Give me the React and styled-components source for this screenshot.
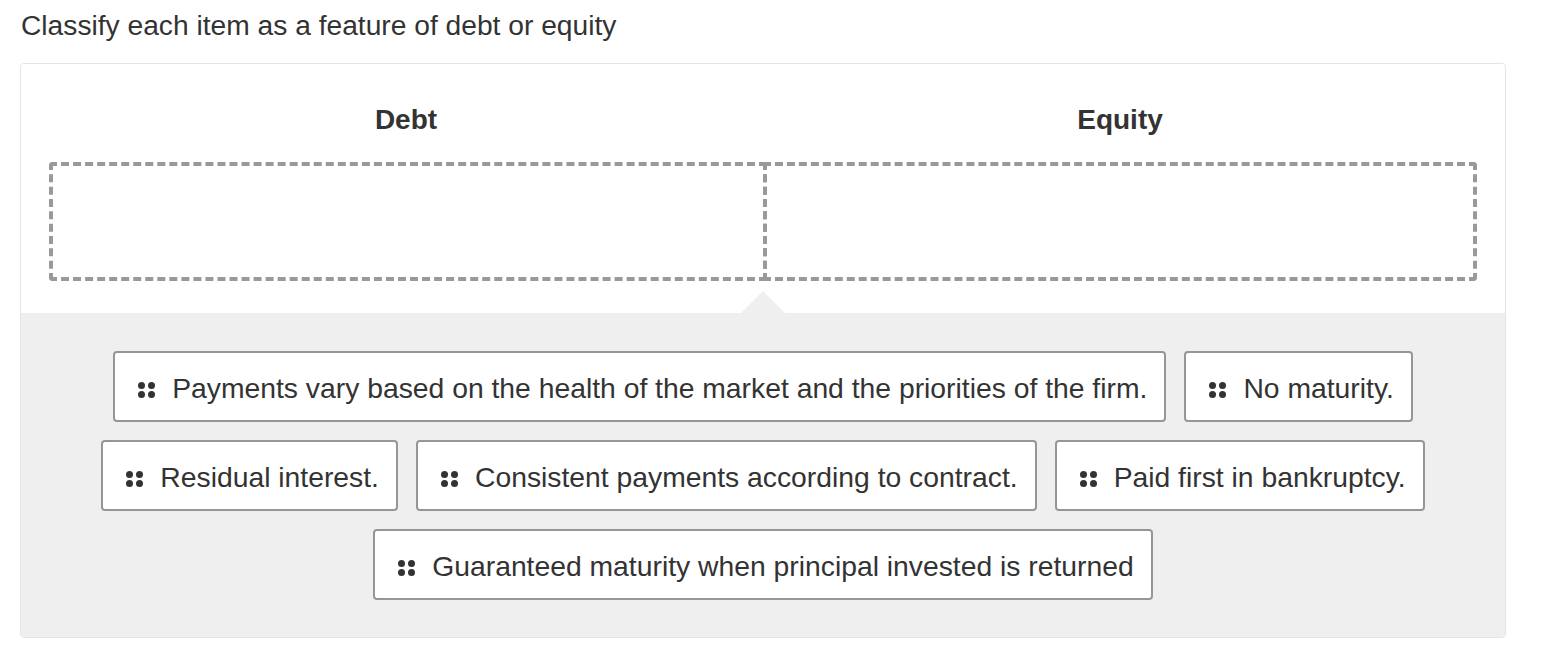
import React from "react";
import styled, { createGlobalStyle } from "styled-components";

const GlobalStyle = createGlobalStyle`
  html, body { margin: 0; padding: 0; background: #ffffff; }
  body { font-family: "Liberation Sans", Arial, Helvetica, sans-serif; color: #333333; }
`;

const Page = styled.div`
  padding: 9px 0 0 20px;
  width: 1486px;
`;

const Prompt = styled.div`
  font-size: 28.2px;
  line-height: 32px;
  color: #333333;
  padding-left: 1px;
  margin-bottom: 22px;
`;

const Card = styled.div`
  border: 1px solid #e4e4e4;
  border-radius: 4px;
  overflow: hidden;
`;

const Targets = styled.div`
  background: #ffffff;
  padding: 40px 28px 32px 28px;
  display: grid;
  grid-template-columns: 1fr 1fr;
`;

const Column = styled.div`
  display: flex;
  flex-direction: column;
  align-items: stretch;
  margin-right: ${(p) => (p.$first ? "-4px" : "0")};
`;

const Heading = styled.div`
  font-size: 28px;
  line-height: 32px;
  font-weight: 700;
  text-align: center;
  color: #333333;
  margin-bottom: 26px;
  margin-right: ${(p) => (p.$first ? "4px" : "0")};
`;

const DropZone = styled.div`
  height: 111px;
  border: 4px dashed #999999;
  border-radius: 4px;
`;

const Tray = styled.div`
  position: relative;
  background: #efefef;
  padding: 38px 20px 37px;
  display: flex;
  flex-wrap: wrap;
  justify-content: center;
  gap: 18px 18px;

  &::before {
    content: "";
    position: absolute;
    top: -22px;
    left: 720px;
    border-left: 22px solid transparent;
    border-right: 22px solid transparent;
    border-bottom: 22px solid #efefef;
  }
`;

const Chip = styled.div`
  display: flex;
  align-items: baseline;
  gap: 17px;
  background: #ffffff;
  border: 2px solid #969696;
  border-radius: 4px;
  padding: 19px 17px 16px 23px;
  font-size: 28.3px;
  line-height: 32px;
  color: #333333;
  white-space: nowrap;
  cursor: grab;
`;

const Grip = styled.svg`
  flex: none;
  width: 17px;
  height: 16px;
`;

const GripIcon = () => (
  <Grip viewBox="0 0 17 16" aria-hidden="true">
    <circle cx="3.5" cy="3.5" r="3.5" fill="#333" />
    <circle cx="13.5" cy="3.5" r="3.5" fill="#333" />
    <circle cx="3.5" cy="12.5" r="3.5" fill="#333" />
    <circle cx="13.5" cy="12.5" r="3.5" fill="#333" />
  </Grip>
);

const items = [
  "Payments vary based on the health of the market and the priorities of the firm.",
  "No maturity.",
  "Residual interest.",
  "Consistent payments according to contract.",
  "Paid first in bankruptcy.",
  "Guaranteed maturity when principal invested is returned",
];

export default function App() {
  return (
    <>
      <GlobalStyle />
      <Page>
        <Prompt>Classify each item as a feature of debt or equity</Prompt>
        <Card>
          <Targets>
            <Column $first>
              <Heading $first>Debt</Heading>
              <DropZone />
            </Column>
            <Column>
              <Heading>Equity</Heading>
              <DropZone />
            </Column>
          </Targets>
          <Tray>
            {items.map((t) => (
              <Chip key={t}>
                <GripIcon />
                <span>{t}</span>
              </Chip>
            ))}
          </Tray>
        </Card>
      </Page>
    </>
  );
}
